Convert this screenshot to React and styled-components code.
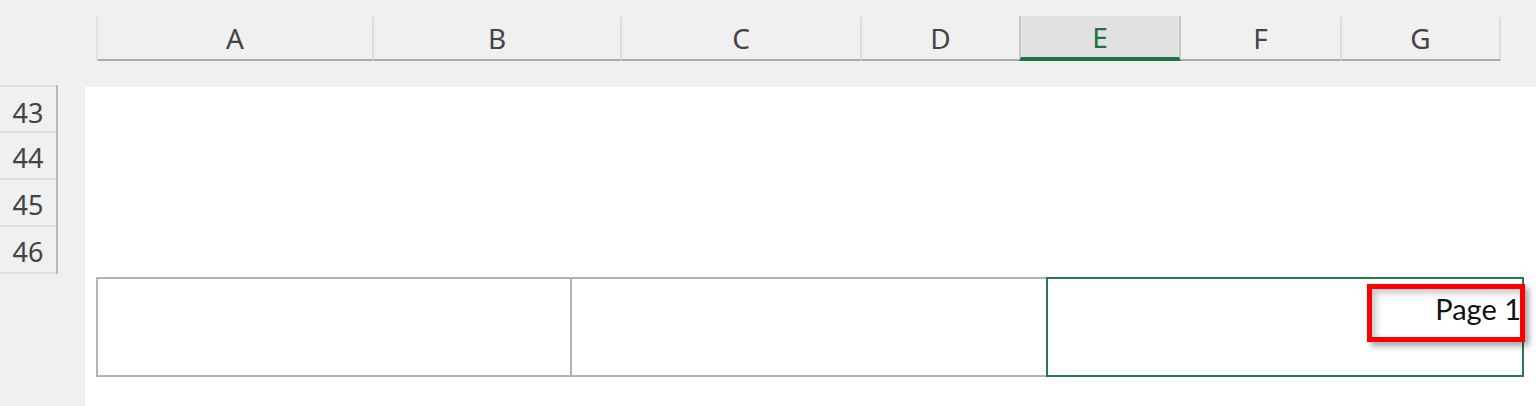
import React from "react";
import styled, { createGlobalStyle } from "styled-components";

const GlobalStyle = createGlobalStyle`
  html, body {
    margin: 0;
    padding: 0;
    background: #f0f0f0;
  }
  body {
    font-family: "Noto Sans", "Open Sans", sans-serif;
  }
`;

const columns = [
  { name: "A", width: 276 },
  { name: "B", width: 248 },
  { name: "C", width: 240 },
  { name: "D", width: 159 },
  { name: "E", width: 162, selected: true },
  { name: "F", width: 161 },
  { name: "G", width: 159 },
];

const rows = [43, 44, 45, 46];

function App() {
  return (
    <Page>
      <GlobalStyle />
      <HeaderBar>
        {columns.map((col) => (
          <ColumnHeader key={col.name} $width={col.width} $selected={col.selected}>
            {col.name}
          </ColumnHeader>
        ))}
      </HeaderBar>
      <Body>
        <Gutter>
          <RowList>
            {rows.map((r, i) => (
              <RowHeader key={r} $first={i === 0}>
                {r}
              </RowHeader>
            ))}
          </RowList>
        </Gutter>
        <Sheet>
          <Footer>
            <FooterSection />
            <FooterSection />
            <FooterSection $active>
              <FooterText>Page 1</FooterText>
              <Highlight />
            </FooterSection>
          </Footer>
        </Sheet>
      </Body>
    </Page>
  );
}

const Page = styled.div`
  width: 1536px;
  height: 406px;
  overflow: hidden;
  background: #f0f0f0;
  display: flex;
  flex-direction: column;
`;

const HeaderBar = styled.div`
  display: flex;
  margin: 17px 0 0 96px;
  height: 44px;
  border-left: 2px solid #e0e0e0;
  width: 1405px;
  box-sizing: border-box;
`;

const ColumnHeader = styled.div`
  flex: 0 0 ${(p) => p.$width}px;
  box-sizing: border-box;
  display: flex;
  align-items: center;
  justify-content: center;
  font-size: 28px;
  color: ${(p) => (p.$selected ? "#217346" : "#444444")};
  background: ${(p) => (p.$selected ? "#e1e1e1" : "#f0f0f0")};
  border-right: 2px solid ${(p) => (p.$selected ? "#c6c6c6" : "#dcdcdc")};
  border-left: ${(p) => (p.$selected ? "2px solid #c6c6c6" : "none")};
  border-bottom: ${(p) => (p.$selected ? "4px solid #217346" : "2px solid #ababab")};
  margin-top: ${(p) => (p.$selected ? "-1px" : "0")};
  margin-left: ${(p) => (p.$selected ? "-2px" : "0")};
  padding-top: ${(p) => (p.$selected ? "1px" : "0")};
  &:first-child {
    margin-left: 0;
  }
`;

const Body = styled.div`
  display: flex;
  flex: 1;
  margin-top: 24px;
`;

const Gutter = styled.div`
  flex: 0 0 85px;
`;

const RowList = styled.div`
  width: 58px;
  box-sizing: border-box;
  border-right: 2px solid #b9b9b9;
`;

const RowHeader = styled.div`
  box-sizing: border-box;
  height: ${(p) => (p.$first ? "48px" : "47px")};
  display: flex;
  align-items: center;
  justify-content: center;
  padding-top: ${(p) => (p.$first ? "6px" : "4px")};
  font-size: 27px;
  color: #444444;
  border-top: ${(p) => (p.$first ? "2px solid #e0e0e0" : "none")};
  border-bottom: 2px solid #dedede;
`;

const Sheet = styled.div`
  flex: 1;
  background: #ffffff;
  margin-top: 2px;
  padding: 190px 0 0 11px;
`;

const Footer = styled.div`
  display: flex;
  height: 100px;
`;

const FooterSection = styled.div`
  position: relative;
  box-sizing: border-box;
  width: ${(p) => (p.$active ? "478px" : "476px")};
  height: 100px;
  border: 2px solid ${(p) => (p.$active ? "#2a7a4c" : "#b3b3b3")};
  z-index: ${(p) => (p.$active ? 1 : 0)};
  & + & {
    margin-left: -2px;
    width: 478px;
  }
`;

const FooterText = styled.div`
  font-family: "Lato", "Liberation Sans", sans-serif;
  font-size: 29px;
  color: #111111;
  text-align: right;
  padding: 12px 1px 0 0;
  line-height: 36px;
`;

const Highlight = styled.div`
  position: absolute;
  left: 319px;
  top: 5px;
  width: 158px;
  height: 58px;
  box-sizing: border-box;
  border: 5px solid #ff0000;
  box-shadow: 4px 4px 6px rgba(0, 0, 0, 0.35),
    inset 4px 4px 7px rgba(0, 0, 0, 0.22);
`;

export default App;
